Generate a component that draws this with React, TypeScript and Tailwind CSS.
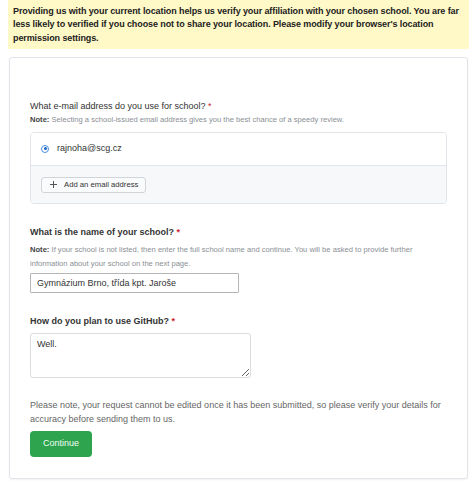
export default function App() {
  return (
    <div className="w-[474px] h-[483px] bg-white overflow-hidden font-['Liberation_Sans',Arial,sans-serif] text-[#24292e]">
      <div className="ml-[8px] mr-[5px] bg-[#fff9c7] px-[5px] pt-[5px] pb-[4px] text-[9px] font-bold leading-[13.3px] tracking-[-0.1px] text-[#222]">
        Providing us with your current location helps us verify your affiliation with your chosen school. You are far less likely to verified if you choose not to share your location. Please modify your browser's location permission settings.
      </div>

      <div className="ml-[9px] mr-[6px] mt-[8px] border border-[#e1e4e8] rounded-[3px] shadow-[0_1px_2px_rgba(0,0,0,0.06)] px-5 pt-[41px] pb-[21px]">
        <label className="block text-[9px] leading-[14px] text-[#333]">
          What e-mail address do you use for school? <span className="text-[#cb2431]">*</span>
        </label>
        <p className="mt-[1px] text-[7.6px] leading-[12px] text-[#8a8f95]">
          <b className="text-[#444]">Note:</b> Selecting a school-issued email address gives you the best chance of a speedy review.
        </p>

        <div className="mt-[6px] border border-[#e1e4e8] rounded-[4px] overflow-hidden">
          <div className="flex items-center h-[32px] pl-[10px] gap-[8px] bg-white">
            <span className="flex items-center justify-center w-[8px] h-[8px] rounded-full border-[1.5px] border-[#4a90e2] bg-white">
              <span className="w-[3px] h-[3px] rounded-full bg-[#1f64c8]" />
            </span>
            <span className="text-[9px] text-[#333]">rajnoha@scg.cz</span>
          </div>
          <div className="border-t border-[#e1e4e8] bg-[#f6f8fa] px-[10px] pt-[11px] pb-[10px]">
            <button className="flex items-center gap-[6px] h-[16px] px-[7px] bg-[#fafbfc] border border-[#d1d5da] rounded-[3px] text-[7.7px] text-[#333]">
              <svg width="9" height="9" viewBox="0 0 9 9" className="text-[#555]">
                <path d="M4.5 1v7M1 4.5h7" stroke="currentColor" strokeWidth="1" />
              </svg>
              Add an email address
            </button>
          </div>
        </div>

        <label className="block mt-[21px] text-[9px] leading-[14px] font-bold text-[#333]">
          What is the name of your school? <span className="text-[#cb2431]">*</span>
        </label>
        <p className="mt-[4px] text-[7.6px] leading-[14px] text-[#8a8f95]">
          <b className="text-[#444]">Note:</b> If your school is not listed, then enter the full school name and continue. You will be asked to provide further information about your school on the next page.
        </p>
        <input
          readOnly
          value="Gymnázium Brno, třída kpt. Jaroše"
          className="block mt-[2px] w-[209px] h-[20px] px-[6px] border border-[#b5b5b5] rounded-[1px] text-[9px] text-[#333] outline-none"
        />

        <label className="block mt-[21px] text-[9px] leading-[14px] font-bold text-[#333]">
          How do you plan to use GitHub? <span className="text-[#cb2431]">*</span>
        </label>
        <textarea
          readOnly
          value="Well."
          className="block mt-[5px] w-[221px] h-[45px] px-[6px] py-[4px] border border-[#dcdcdc] rounded-[3px] text-[9px] text-[#333] outline-none"
        />

        <p className="mt-[20px] text-[9px] leading-[14px] text-[#666]">
          Please note, your request cannot be edited once it has been submitted, so please verify your details for accuracy before sending them to us.
        </p>
        <button className="mt-[5px] w-[62px] h-[26px] rounded-[4px] bg-[#2ea44f] text-[#f0fff4] text-[9px]">
          Continue
        </button>
      </div>
    </div>
  )
}
